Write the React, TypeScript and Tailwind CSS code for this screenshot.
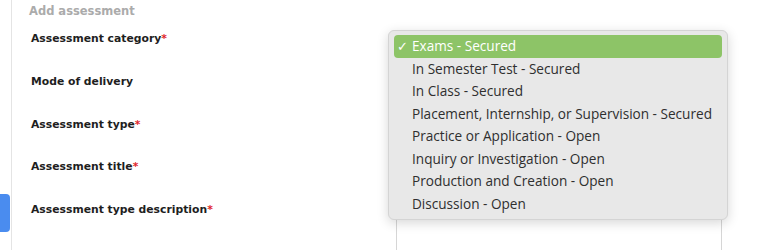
import React from "react";

const labels = [
  { text: "Assessment category", required: true },
  { text: "Mode of delivery", required: false },
  { text: "Assessment type", required: true },
  { text: "Assessment title", required: true },
  { text: "Assessment type description", required: true },
];

const options = [
  "Exams - Secured",
  "In Semester Test - Secured",
  "In Class - Secured",
  "Placement, Internship, or Supervision - Secured",
  "Practice or Application - Open",
  "Inquiry or Investigation - Open",
  "Production and Creation - Open",
  "Discussion - Open",
];

export default function App() {
  return (
    <div className="relative h-[250px] w-[768px] overflow-hidden bg-white">
      <div className="flex h-full">
        {/* Side tab */}
        <div className="flex w-[11px] flex-col pt-[194px]">
          <div className="h-[38px] w-[10px] rounded-r-[4px] bg-[#4a8cef]" />
        </div>
        <div className="w-px bg-[#e4e4e4]" />

        {/* Form */}
        <div className="flex-1 pl-[19px] pt-[3px] font-['DejaVu_Sans',sans-serif]">
          <h2 className="-ml-[2px] text-[11.5px] font-bold leading-[16px] text-[#ababab]">
            Add assessment
          </h2>
          <div className="mt-[13px] flex flex-col">
            {labels.map((l, i) => (
              <div key={l.text} className="flex h-[42.75px]">
                <label className="w-[365px] text-[10.8px] font-bold leading-[14px] text-[#1e1e1e]">
                  {l.text}
                  {l.required && <span className="text-[#e0262b]">*</span>}
                </label>
                <div
                  className={
                    i === 4
                      ? "h-[90px] w-[326px] rounded-[3px] border border-[#d6d6d6] bg-white"
                      : "h-[28px] w-[326px] rounded-[3px] border border-[#d6d6d6] bg-white"
                  }
                />
              </div>
            ))}
          </div>
        </div>
      </div>

      {/* Open select menu */}
      <div className="absolute left-[388px] top-[30px] w-[340px] rounded-[6px] border border-[#d4d4d4] bg-[#e8e8e8] px-[5px] py-[4px] font-['Open_Sans',Arial,sans-serif] shadow-[0_3px_12px_rgba(0,0,0,0.16)]">
        {options.map((o, i) => (
          <div
            key={o}
            className={
              i === 0
                ? "flex h-[22.5px] items-center rounded-[4px] bg-[#8dc467] pl-[3px] text-[13.6px] text-white"
                : "flex h-[22.5px] items-center pl-[18px] text-[13.6px] text-[#2f2f2f]"
            }
          >
            {i === 0 && <span className="w-[15px] text-[13px]">✓</span>}
            {o}
          </div>
        ))}
      </div>
    </div>
  );
}
